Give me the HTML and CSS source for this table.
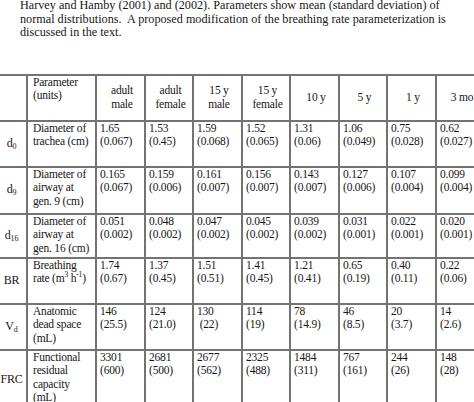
FILE: index.html
```html
<!DOCTYPE html>
<html>
<head>
<meta charset="utf-8">
<link rel="stylesheet" href="styles.css">
</head>
<body>
<div class="page">
  <p class="caption">Harvey and Hamby (2001) and (2002). Parameters show mean (standard deviation) of<br>normal distributions.&nbsp; A proposed modification of the breathing rate parameterization is<br>discussed in the text.</p>
  <table class="params">
    <colgroup>
      <col class="c-sym"><col class="c-param">
      <col class="c-wide"><col class="c-narrow"><col class="c-wide"><col class="c-narrow">
      <col class="c-wide"><col class="c-narrow"><col class="c-wide"><col class="c-wide">
    </colgroup>
    <tr class="r-head">
      <td class="sym"></td>
      <td class="param">Parameter<br>(units)</td>
      <td class="head">adult<br>male</td>
      <td class="head">adult<br>female</td>
      <td class="head">15 y<br>male</td>
      <td class="head">15 y<br>female</td>
      <td class="head">10 y</td>
      <td class="head">5 y</td>
      <td class="head">1 y</td>
      <td class="head">3 mo</td>
    </tr>
    <tr class="r-d0">
      <td class="sym">d<sub>0</sub></td>
      <td class="param">Diameter of<br>trachea (cm)</td>
      <td>1.65<br>(0.067)</td>
      <td>1.53<br>(0.45)</td>
      <td>1.59<br>(0.068)</td>
      <td>1.52<br>(0.065)</td>
      <td>1.31<br>(0.06)</td>
      <td>1.06<br>(0.049)</td>
      <td>0.75<br>(0.028)</td>
      <td>0.62<br>(0.027)</td>
    </tr>
    <tr class="r-d9">
      <td class="sym">d<sub>9</sub></td>
      <td class="param">Diameter of<br>airway at<br>gen. 9 (cm)</td>
      <td>0.165<br>(0.067)</td>
      <td>0.159<br>(0.006)</td>
      <td>0.161<br>(0.007)</td>
      <td>0.156<br>(0.007)</td>
      <td>0.143<br>(0.007)</td>
      <td>0.127<br>(0.006)</td>
      <td>0.107<br>(0.004)</td>
      <td>0.099<br>(0.004)</td>
    </tr>
    <tr class="r-d16">
      <td class="sym">d<sub>16</sub></td>
      <td class="param">Diameter of<br>airway at<br>gen. 16 (cm)</td>
      <td>0.051<br>(0.002)</td>
      <td>0.048<br>(0.002)</td>
      <td>0.047<br>(0.002)</td>
      <td>0.045<br>(0.002)</td>
      <td>0.039<br>(0.002)</td>
      <td>0.031<br>(0.001)</td>
      <td>0.022<br>(0.001)</td>
      <td>0.020<br>(0.001)</td>
    </tr>
    <tr class="r-br">
      <td class="sym">BR</td>
      <td class="param">Breathing<br>rate (m<sup>3</sup> h<sup>-1</sup>)</td>
      <td>1.74<br>(0.67)</td>
      <td>1.37<br>(0.45)</td>
      <td>1.51<br>(0.51)</td>
      <td>1.41<br>(0.45)</td>
      <td>1.21<br>(0.41)</td>
      <td>0.65<br>(0.19)</td>
      <td>0.40<br>(0.11)</td>
      <td>0.22<br>(0.06)</td>
    </tr>
    <tr class="r-vd">
      <td class="sym">V<sub>d</sub></td>
      <td class="param">Anatomic<br>dead space<br>(mL)</td>
      <td>146<br>(25.5)</td>
      <td>124<br>(21.0)</td>
      <td>130<br>&nbsp;(22)</td>
      <td>114<br>(19)</td>
      <td>78<br>(14.9)</td>
      <td>46<br>(8.5)</td>
      <td>20<br>(3.7)</td>
      <td>14<br>(2.6)</td>
    </tr>
    <tr class="r-frc">
      <td class="sym">FRC</td>
      <td class="param">Functional<br>residual<br>capacity<br>(mL)</td>
      <td>3301<br>(600)</td>
      <td>2681<br>(500)</td>
      <td>2677<br>(562)</td>
      <td>2325<br>(488)</td>
      <td>1484<br>(311)</td>
      <td>767<br>(161)</td>
      <td>244<br>(26)</td>
      <td>148<br>(28)</td>
    </tr>
  </table>
</div>
</body>
</html>
```
FILE: styles.css
```css
html, body {
  margin: 0;
  padding: 0;
  background: #ffffff;
  overflow: hidden;
}

.page {
  width: 474px;
  height: 402px;
  overflow: hidden;
  font-family: "Liberation Serif", "Times New Roman", serif;
  color: #161616;
}

.caption {
  margin: -1px 0 0 20px;
  font-size: 12.2px;
  line-height: 13.5px;
  white-space: nowrap;
}

.params {
  margin-top: 34px;
  margin-left: -3px;
  border-collapse: collapse;
  table-layout: fixed;
  width: 488px;
  font-size: 11.5px;
  letter-spacing: -0.2px;
  line-height: 13.5px;
}

.c-sym { width: 30px; }
.c-param { width: 69px; }
.c-wide { width: 49px; }
.c-narrow { width: 48px; }

.params td {
  box-sizing: border-box;
  border: 2px solid #737373;
  padding: 0 0 0 3px;
  vertical-align: top;
  text-align: left;
  white-space: nowrap;
  overflow: visible;
}

.params td.sym {
  border-left: none;
  text-align: center;
  vertical-align: middle;
  padding: 0;
  font-size: 12px;
}

.params td.param {
  padding-left: 5px;
}

.params td.head {
  text-align: center;
  vertical-align: middle;
  padding: 0 0 0 3px;
}

.params sub {
  font-size: 8px;
  vertical-align: -2px;
  line-height: 0;
}

.params sup {
  font-size: 7.5px;
  vertical-align: 5px;
  line-height: 0;
}

.r-head td { height: 46px; }
.r-d0 td { height: 46px; }
.r-d9 td { height: 47px; }
.r-d16 td { height: 44px; }
.r-br td { height: 46px; }
.r-vd td { height: 46px; }
.r-frc td { height: 60px; }
```
